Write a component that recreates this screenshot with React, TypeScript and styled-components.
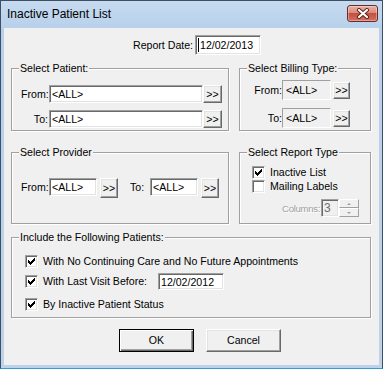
import React from "react";
import styled, { createGlobalStyle } from "styled-components";

const GlobalStyle = createGlobalStyle`
  html, body {
    margin: 0;
    padding: 0;
    background: #f0f0f0;
  }
  body {
    font-family: "Liberation Sans", Arial, sans-serif;
    font-size: 10.6px;
    color: #000;
  }
  * {
    box-sizing: border-box;
  }
`;

const Window = styled.div`
  width: 383px;
  height: 369px;
  display: flex;
  flex-direction: column;
  border: 1px solid #3e4f63;
  border-bottom-color: #3a9bd0;
  background: linear-gradient(#c6dbf0, #b8d0ea 27px, #bcd3eb);
`;

const TitleBar = styled.div`
  height: 27px;
  flex: none;
  display: flex;
  align-items: flex-start;
  justify-content: space-between;
  padding: 0 4px 0 6px;
`;

const Title = styled.span`
  font-size: 12px;
  line-height: 27px;
  color: #000;
`;

const CloseButton = styled.div`
  margin-top: 4px;
  width: 31px;
  height: 17px;
  border: 1px solid #6b2a26;
  border-radius: 3px;
  display: flex;
  align-items: center;
  justify-content: center;
  background: linear-gradient(#e9b1a6, #d98a7c 45%, #c5503f 50%, #d0705f);
  box-shadow: inset 0 0 0 1px rgba(255, 255, 255, 0.35);
`;

const Client = styled.div`
  flex: 1;
  margin: 0 3px 3px;
  background: #f0f0f0;
  padding: 7px 8px 0 7px;
  display: flex;
  flex-direction: column;
`;

const DateRow = styled.div`
  height: 20px;
  display: flex;
  align-items: center;
  padding-left: 122px;
`;

const Label = styled.span<{ $w?: number; $right?: boolean }>`
  flex: none;
  width: ${(p) => (p.$w ? `${p.$w}px` : "auto")};
  text-align: ${(p) => (p.$right ? "right" : "left")};
  white-space: nowrap;
  line-height: 13px;
`;

const Sunken = styled.div<{ $w: number; $h: number }>`
  flex: none;
  width: ${(p) => p.$w}px;
  height: ${(p) => p.$h}px;
  display: flex;
  align-items: center;
  padding-left: 2px;
  background: #fff;
  border: 1px solid;
  border-color: #a0a0a0 #fff #fff #a0a0a0;
  box-shadow: inset 1px 1px 0 #696969, inset -1px -1px 0 #e3e3e3;
  white-space: nowrap;
`;

const StaticBox = styled.div<{ $w: number; $h: number }>`
  flex: none;
  width: ${(p) => p.$w}px;
  height: ${(p) => p.$h}px;
  display: flex;
  align-items: center;
  padding-left: 3px;
  background: #f0f0f0;
  border: 1px solid;
  border-color: #a0a0a0 #fff #fff #a0a0a0;
`;

const Caret = styled.span`
  width: 1px;
  height: 14px;
  background: #000;
  margin-right: 1px;
`;

const Raised = styled.div<{ $w: number; $h: number }>`
  flex: none;
  width: ${(p) => p.$w}px;
  height: ${(p) => p.$h}px;
  display: flex;
  align-items: center;
  justify-content: center;
  background: #f0f0f0;
  border: 1px solid;
  border-color: #fff #696969 #696969 #fff;
  box-shadow: inset -1px -1px 0 #a0a0a0, inset 1px 1px 0 #e3e3e3;
  line-height: 13px;
`;

const GroupRow = styled.div<{ $top: number; $cols?: string }>`
  margin-top: ${(p) => p.$top}px;
  display: grid;
  grid-template-columns: ${(p) => p.$cols ?? "218px 132px"};
  column-gap: 10px;
`;

const Group = styled.fieldset<{ $h: number }>`
  margin: 0;
  padding: 0;
  min-width: 0;
  height: ${(p) => p.$h}px;
  border: 1px solid #a0a0a0;
  box-shadow: inset 1px 1px 0 #fff, 1px 1px 0 #fff;
`;

const Legend = styled.legend`
  margin-left: 7px;
  padding: 0 1px;
  line-height: 13px;
  background: #f0f0f0;
`;

const PatientBody = styled.div`
  padding: 10px 0 0 9px;
  display: grid;
  grid-template-columns: 28px 154px 19px;
  grid-auto-rows: 18px;
  row-gap: 7px;
  align-items: center;
  ${Label} {
    padding-right: 1px;
  }
`;

const BillingBody = styled.div`
  padding: 5px 0 0 14px;
  display: grid;
  grid-template-columns: 28px 49px 17px;
  grid-auto-rows: 20px;
  row-gap: 8px;
  column-gap: 0;
  align-items: center;
  ${Raised} {
    margin-left: 2px;
  }
`;

const ProviderBody = styled.div`
  padding: 19px 0 0 9px;
  display: flex;
  align-items: flex-start;
  ${Label} {
    line-height: 18px;
  }
`;

const Spacer = styled.span<{ $w: number }>`
  flex: none;
  width: ${(p) => p.$w}px;
`;

const ReportBody = styled.div`
  padding: 7px 0 0 12px;
  display: flex;
  flex-direction: column;
  row-gap: 1px;
`;

const IncludeBody = styled.div`
  padding: 11px 0 0 13px;
  display: flex;
  flex-direction: column;
`;

const CheckRow = styled.div<{ $top?: number; $h?: number }>`
  margin-top: ${(p) => p.$top ?? 0}px;
  height: ${(p) => p.$h ?? 13}px;
  display: flex;
  align-items: center;
  gap: 5px;
`;

const Box = styled.div`
  flex: none;
  width: 13px;
  height: 13px;
  background: #fff;
  border: 1px solid;
  border-color: #a0a0a0 #fff #fff #a0a0a0;
  box-shadow: inset 1px 1px 0 #696969, inset -1px -1px 0 #e3e3e3;
  display: flex;
  align-items: center;
  justify-content: center;
`;

const ColumnsRow = styled.div`
  margin-top: 5px;
  height: 18px;
  display: flex;
  align-items: center;
  padding-left: 30px;
`;

const Disabled = styled.span`
  flex: none;
  width: 39px;
  font-size: 9.6px;
  letter-spacing: -0.3px;
  color: #a0a0a0;
  text-shadow: 1px 1px 0 #fff;
  white-space: nowrap;
`;

const DisabledField = styled(Sunken)`
  background: #f0f0f0;
  color: #6d6d6d;
  font-size: 12px;
`;

const Spinner = styled.div`
  width: 20px;
  height: 18px;
  display: flex;
  flex-direction: column;
`;

const SpinHalf = styled.div<{ $down?: boolean }>`
  height: 9px;
  display: flex;
  align-items: center;
  justify-content: center;
  background: #f0f0f0;
  border: 1px solid;
  border-color: #fff #a0a0a0 #a0a0a0 #fff;
  &::after {
    content: "";
    width: 0;
    height: 0;
    border-left: 2px solid transparent;
    border-right: 2px solid transparent;
    ${(p) =>
      p.$down ? "border-top: 2px solid #a0a0a0;" : "border-bottom: 2px solid #a0a0a0;"}
  }
`;

const ButtonRow = styled.div`
  margin-top: 11px;
  padding-left: 108px;
  display: flex;
  gap: 12px;
`;

const DialogButton = styled(Raised)<{ $default?: boolean }>`
  ${(p) =>
    p.$default &&
    `
    border-color: #000;
    box-shadow: inset 1px 1px 0 #fff, inset -1px -1px 0 #696969, inset -2px -2px 0 #a0a0a0;
  `}
`;

const Check = () => (
  <svg width="7" height="7" viewBox="0 0 7 7" shapeRendering="crispEdges">
    <path
      fill="#000"
      d="M6 0h1v3h-1zM5 1h1v3h-1zM4 2h1v3h-1zM0 2h1v3h-1zM1 3h1v3h-1zM2 4h1v3h-1zM3 3h1v3h-1z"
    />
  </svg>
);

const CloseX = () => (
  <svg width="14" height="11" viewBox="0 0 14 11">
    <path d="M3 2 L11 9 M11 2 L3 9" stroke="#5b1d17" strokeWidth="4" strokeLinecap="round" />
    <path d="M3 2 L11 9 M11 2 L3 9" stroke="#fff" strokeWidth="2.2" strokeLinecap="round" />
  </svg>
);

const CheckBox = ({ checked }: { checked?: boolean }) => <Box>{checked && <Check />}</Box>;

export default function App() {
  return (
    <>
      <GlobalStyle />
      <Window>
        <TitleBar>
          <Title>Inactive Patient List</Title>
          <CloseButton>
            <CloseX />
          </CloseButton>
        </TitleBar>
        <Client>
          <DateRow>
            <Label $w={60} $right>
              Report Date:
            </Label>
            <Spacer $w={2} />
            <Sunken $w={66} $h={20}>
              <Caret />
              12/02/2013
            </Sunken>
          </DateRow>

          <GroupRow $top={7}>
            <Group $h={69}>
              <Legend>Select Patient:</Legend>
              <PatientBody>
                <Label $right>From:</Label>
                <Sunken $w={154} $h={18}>&lt;ALL&gt;</Sunken>
                <Raised $w={19} $h={18}>&gt;&gt;</Raised>
                <Label $right>To:</Label>
                <Sunken $w={154} $h={18}>&lt;ALL&gt;</Sunken>
                <Raised $w={19} $h={18}>&gt;&gt;</Raised>
              </PatientBody>
            </Group>
            <Group $h={69}>
              <Legend>Select Billing Type:</Legend>
              <BillingBody>
                <Label $right>From:</Label>
                <StaticBox $w={49} $h={20}>&lt;ALL&gt;</StaticBox>
                <Raised $w={17} $h={17}>&gt;&gt;</Raised>
                <Label $right>To:</Label>
                <StaticBox $w={49} $h={20}>&lt;ALL&gt;</StaticBox>
                <Raised $w={17} $h={17}>&gt;&gt;</Raised>
              </BillingBody>
            </Group>
          </GroupRow>

          <GroupRow $top={15}>
            <Group $h={78}>
              <Legend>Select Provider</Legend>
              <ProviderBody>
                <Label $w={28}>From:</Label>
                <Sunken $w={48} $h={18}>&lt;ALL&gt;</Sunken>
                <Spacer $w={3} />
                <Raised $w={18} $h={20}>&gt;&gt;</Raised>
                <Spacer $w={12} />
                <Label $w={20}>To:</Label>
                <Sunken $w={48} $h={18}>&lt;ALL&gt;</Sunken>
                <Spacer $w={3} />
                <Raised $w={18} $h={20}>&gt;&gt;</Raised>
              </ProviderBody>
            </Group>
            <Group $h={78}>
              <Legend>Select Report Type</Legend>
              <ReportBody>
                <CheckRow>
                  <CheckBox checked />
                  <Label>Inactive List</Label>
                </CheckRow>
                <CheckRow>
                  <CheckBox />
                  <Label>Mailing Labels</Label>
                </CheckRow>
                <ColumnsRow>
                  <Disabled>Columns:</Disabled>
                  <DisabledField $w={18} $h={18}>3</DisabledField>
                  <Spinner>
                    <SpinHalf />
                    <SpinHalf $down />
                  </Spinner>
                </ColumnsRow>
              </ReportBody>
            </Group>
          </GroupRow>

          <GroupRow $top={7} $cols="360px">
            <Group $h={87}>
              <Legend>Include the Following Patients:</Legend>
              <IncludeBody>
                <CheckRow>
                  <CheckBox checked />
                  <Label>With No Continuing Care and No Future Appointments</Label>
                </CheckRow>
                <CheckRow $top={5} $h={17}>
                  <CheckBox checked />
                  <Label $w={110}>With Last Visit Before:</Label>
                  <Sunken $w={66} $h={17}>12/02/2012</Sunken>
                </CheckRow>
                <CheckRow $top={8}>
                  <CheckBox checked />
                  <Label>By Inactive Patient Status</Label>
                </CheckRow>
              </IncludeBody>
            </Group>
          </GroupRow>

          <ButtonRow>
            <DialogButton $w={75} $h={23} $default>
              OK
            </DialogButton>
            <DialogButton $w={75} $h={23}>
              Cancel
            </DialogButton>
          </ButtonRow>
        </Client>
      </Window>
    </>
  );
}
